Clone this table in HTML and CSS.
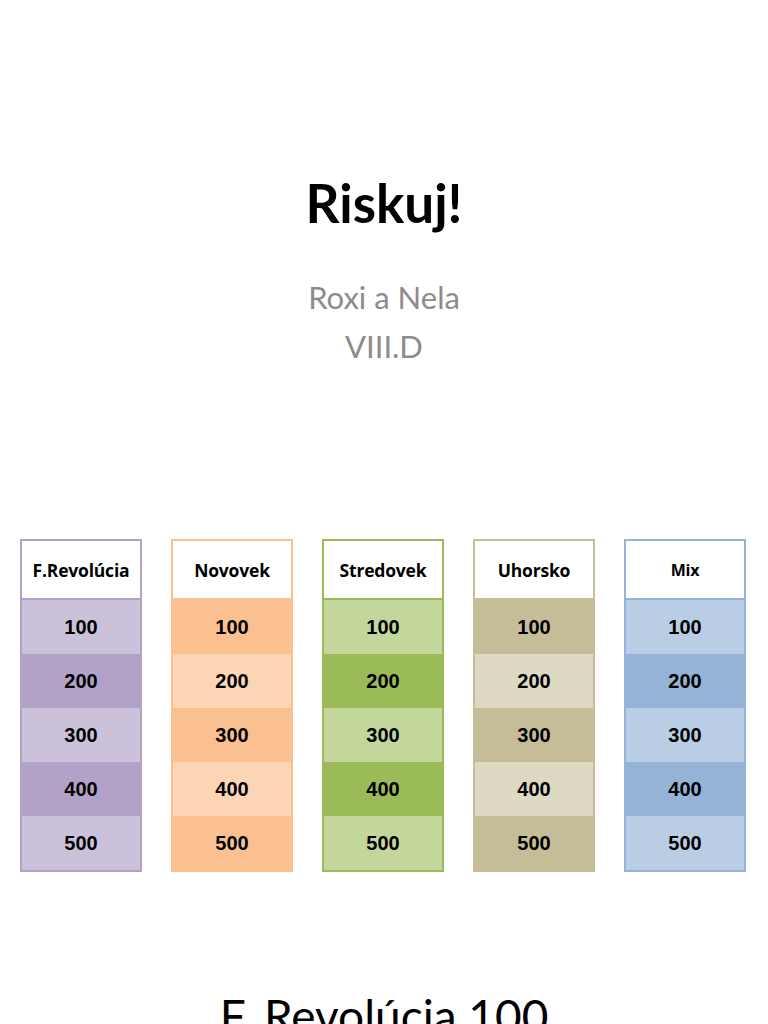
FILE: index.html
```html
<!DOCTYPE html>
<html lang="sk">
<head>
<meta charset="utf-8">
<title>Riskuj!</title>
<link rel="stylesheet" href="styles.css">
</head>
<body>
<section class="slide title-slide">
  <h1 class="title">Riskuj!</h1>
  <div class="subtitle">
    <p>Roxi a Nela</p>
    <p>VIII.D</p>
  </div>
</section>
<section class="slide board-slide">
  <div class="board">
    <div class="col purple">
      <div class="head">F.Revolúcia</div>
      <div class="cell a">100</div><div class="cell b">200</div><div class="cell a">300</div><div class="cell b">400</div><div class="cell a">500</div>
    </div>
    <div class="col orange">
      <div class="head">Novovek</div>
      <div class="cell a">100</div><div class="cell b">200</div><div class="cell a">300</div><div class="cell b">400</div><div class="cell a">500</div>
    </div>
    <div class="col green">
      <div class="head">Stredovek</div>
      <div class="cell a">100</div><div class="cell b">200</div><div class="cell a">300</div><div class="cell b">400</div><div class="cell a">500</div>
    </div>
    <div class="col tan">
      <div class="head">Uhorsko</div>
      <div class="cell a">100</div><div class="cell b">200</div><div class="cell a">300</div><div class="cell b">400</div><div class="cell a">500</div>
    </div>
    <div class="col blue">
      <div class="head small">Mix</div>
      <div class="cell a">100</div><div class="cell b">200</div><div class="cell a">300</div><div class="cell b">400</div><div class="cell a">500</div>
    </div>
  </div>
</section>
<section class="slide question-slide">
  <h2 class="q-title">F. Revolúcia 100</h2>
</section>
</body>
</html>
```
FILE: styles.css
```css
html, body {
  margin: 0;
  padding: 0;
  background: #ffffff;
}
body {
  font-family: Lato, "Open Sans", sans-serif;
  color: #000;
  overflow: hidden;
}
.title-slide {
  display: flex;
  flex-direction: column;
  align-items: center;
  padding-top: 168px;
  height: 371px;
}
.title {
  margin: 0;
  font-family: Lato, sans-serif;
  font-weight: 700;
  font-size: 53px;
  line-height: 70px;
}
.subtitle {
  margin-top: 35px;
  text-align: center;
  color: #8c8c8c;
  font-family: Lato, sans-serif;
  font-size: 31px;
}
.subtitle p {
  margin: 0;
  line-height: 49px;
}
.board-slide {
  height: 447px;
}
.board {
  display: flex;
  gap: 29px;
  padding-left: 20px;
}
.col {
  width: 118px;
  border: 2px solid var(--line);
  display: flex;
  flex-direction: column;
}
.head {
  height: 57px;
  border-bottom: 2px solid var(--line);
  display: flex;
  align-items: center;
  justify-content: center;
  font-family: "Open Sans", sans-serif;
  font-weight: 700;
  font-size: 17.5px;
  letter-spacing: -0.2px;
  background: #fff;
}
.head.small {
  font-size: 16px;
}
.cell {
  height: 54px;
  display: flex;
  align-items: center;
  justify-content: center;
  font-family: "Liberation Sans", Arial, sans-serif;
  font-weight: 700;
  font-size: 20px;
}
.cell.a { background: var(--light); }
.cell.b { background: var(--dark); }
.purple { --line: #b3a2c7; --light: #ccc1da; --dark: #b3a2c7; }
.orange { --line: #fac090; --light: #fac090; --dark: #fcd5b5; }
.green  { --line: #9bbb59; --light: #c3d69b; --dark: #9bbb59; }
.tan    { --line: #c4bd97; --light: #c4bd97; --dark: #ddd9c3; }
.blue   { --line: #95b3d7; --light: #b9cde5; --dark: #95b3d7; }
.question-slide {
  display: flex;
  justify-content: center;
}
.q-title {
  margin: 0;
  font-family: Lato, sans-serif;
  font-weight: 400;
  font-size: 46px;
  line-height: 60px;
}
```
